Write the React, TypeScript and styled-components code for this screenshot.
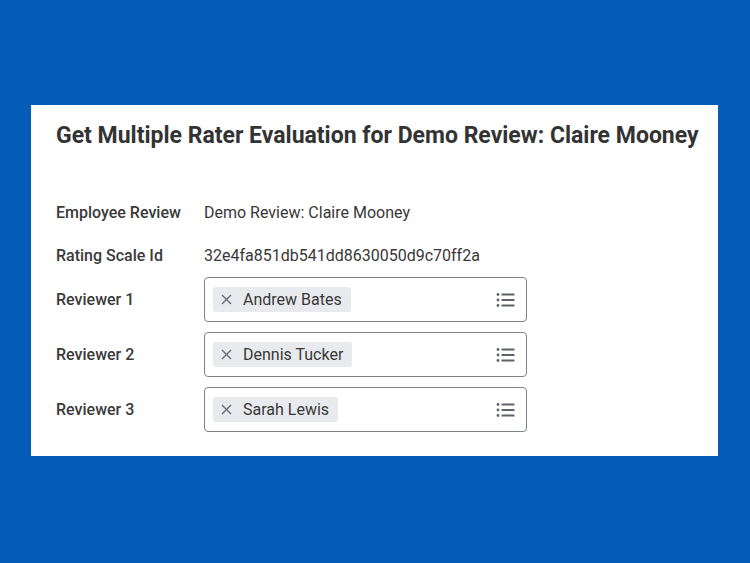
import React from "react";
import styled, { createGlobalStyle } from "styled-components";

const GlobalStyle = createGlobalStyle`
  html, body {
    margin: 0;
    padding: 0;
    background: #055bb8;
    font-family: Roboto, "Liberation Sans", Arial, sans-serif;
  }
`;

const Page = styled.div`
  width: 749px;
  height: 561px;
  display: flex;
  align-items: center;
  justify-content: center;
`;

const Card = styled.div`
  width: 687px;
  height: 351px;
  box-sizing: border-box;
  background: #ffffff;
  padding: 16px 10px 0 25px;
`;

const Title = styled.h1`
  margin: 0;
  font-size: 23px;
  line-height: 30px;
  font-weight: 700;
  color: #333333;
  white-space: nowrap;
`;

const Form = styled.div`
  margin-top: 39px;
  display: flex;
  flex-direction: column;
`;

const Row = styled.div<{ $h: number; $gap?: number }>`
  display: grid;
  grid-template-columns: 148px 323px;
  align-items: center;
  height: ${(p) => p.$h}px;
  margin-bottom: ${(p) => p.$gap ?? 0}px;
`;

const Label = styled.div`
  font-size: 16px;
  font-weight: 500;
  color: #3a3a3a;
`;

const Value = styled.div`
  font-size: 16px;
  color: #383838;
`;

const Box = styled.div`
  height: 45px;
  box-sizing: border-box;
  border: 1px solid #7e838b;
  border-radius: 4px;
  display: flex;
  align-items: center;
  padding: 0 10px 0 8px;
`;

const Pill = styled.div`
  height: 25px;
  display: flex;
  align-items: center;
  gap: 11px;
  background: #e9eaed;
  border-radius: 3px;
  padding: 0 9px 0 8px;
  font-size: 16px;
  color: #383838;
`;

const Spacer = styled.div`
  flex: 1;
`;

const RemoveIcon = () => (
  <svg width="11" height="11" viewBox="0 0 11 11" stroke="#6b6f76" strokeWidth="1.4">
    <line x1="1" y1="1" x2="10" y2="10" />
    <line x1="10" y1="1" x2="1" y2="10" />
  </svg>
);

const ListIcon = () => (
  <svg width="20" height="16" viewBox="0 0 20 16" fill="#5f6368">
    <circle cx="2" cy="2.5" r="1.4" />
    <circle cx="2" cy="8" r="1.4" />
    <circle cx="2" cy="13.5" r="1.4" />
    <rect x="5.5" y="1.5" width="13" height="2" rx="0.5" />
    <rect x="5.5" y="7" width="13" height="2" rx="0.5" />
    <rect x="5.5" y="12.5" width="13" height="2" rx="0.5" />
  </svg>
);

const reviewers = ["Andrew Bates", "Dennis Tucker", "Sarah Lewis"];

export default function App() {
  return (
    <>
      <GlobalStyle />
      <Page>
        <Card>
          <Title>Get Multiple Rater Evaluation for Demo Review: Claire Mooney</Title>
          <Form>
            <Row $h={44}>
              <Label>Employee Review</Label>
              <Value>Demo Review: Claire Mooney</Value>
            </Row>
            <Row $h={43}>
              <Label>Rating Scale Id</Label>
              <Value>32e4fa851db541dd8630050d9c70ff2a</Value>
            </Row>
            {reviewers.map((name, i) => (
              <Row key={name} $h={45} $gap={10}>
                <Label>Reviewer {i + 1}</Label>
                <Box>
                  <Pill>
                    <RemoveIcon />
                    {name}
                  </Pill>
                  <Spacer />
                  <ListIcon />
                </Box>
              </Row>
            ))}
          </Form>
        </Card>
      </Page>
    </>
  );
}
